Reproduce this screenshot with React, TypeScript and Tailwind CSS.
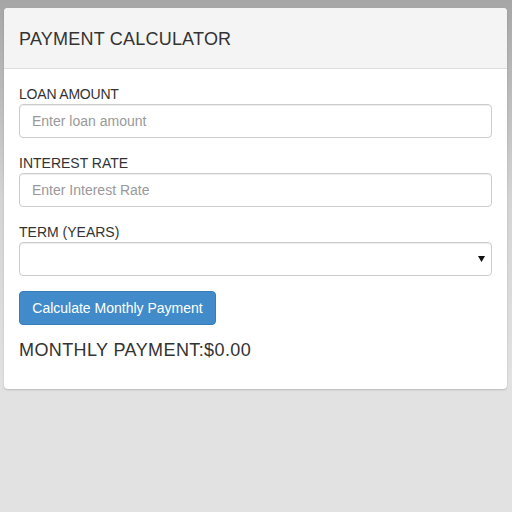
import React from "react";

export default function App() {
  return (
    <div
      className="min-h-[512px] w-full bg-[linear-gradient(to_bottom,#a6a6a6_0px,#d4d4d4_200px,#e2e2e2_390px,#e2e2e2_100%)] pt-[8px] px-[4px] pr-[5px]"
      style={{ fontFamily: '"Liberation Sans", Arial, sans-serif' }}
    >
      <div className="bg-white rounded-[4px] shadow-[0_1px_2px_rgba(0,0,0,0.18)] overflow-hidden">
        <div className="h-[61px] bg-[#f4f4f4] border-b border-[#dddddd] px-[15px] flex items-center">
          <h1 className="text-[18px] leading-[20px] text-[#333333] pt-[2px] tracking-[0.22px]">PAYMENT CALCULATOR</h1>
        </div>
        <div className="px-[15px] pt-[15px] pb-[29px] text-[#333333]">
          <div className="mb-[15px]">
            <label className="block text-[14px] leading-[20px] h-[20px] tracking-[-0.2px]">LOAN AMOUNT</label>
            <input
              type="text"
              placeholder="Enter loan amount"
              className="block w-full h-[34px] px-[12px] text-[14px] border border-[#cccccc] rounded-[4px] shadow-[inset_0_1px_1px_rgba(0,0,0,0.075)] placeholder:text-[#999999] outline-none"
            />
          </div>
          <div className="mb-[15px]">
            <label className="block text-[14px] leading-[20px] h-[20px]">INTEREST RATE</label>
            <input
              type="text"
              placeholder="Enter Interest Rate"
              className="block w-full h-[34px] px-[12px] text-[14px] border border-[#cccccc] rounded-[4px] shadow-[inset_0_1px_1px_rgba(0,0,0,0.075)] placeholder:text-[#999999] outline-none"
            />
          </div>
          <div className="mb-[15px]">
            <label className="block text-[14px] leading-[20px] h-[20px]">TERM (YEARS)</label>
            <div className="relative h-[34px] w-full border border-[#cccccc] rounded-[4px] shadow-[inset_0_1px_1px_rgba(0,0,0,0.075)] bg-white">
              <svg
                className="absolute right-[6px] top-[13px]"
                width="7"
                height="6"
                viewBox="0 0 7 6"
              >
                <polygon points="0,0 7,0 3.5,6" fill="#111111" />
              </svg>
            </div>
          </div>
          <button
            type="button"
            className="h-[34px] px-[12px] w-[197px] bg-[#428bca] border border-[#357ebd] rounded-[4px] text-white text-[14px] leading-[20px]"
          >
            Calculate Monthly Payment
          </button>
          <div className="mt-[15px] text-[18px] leading-[20px] text-[#333333] tracking-[0.4px]">MONTHLY PAYMENT:$0.00</div>
        </div>
      </div>
    </div>
  );
}
